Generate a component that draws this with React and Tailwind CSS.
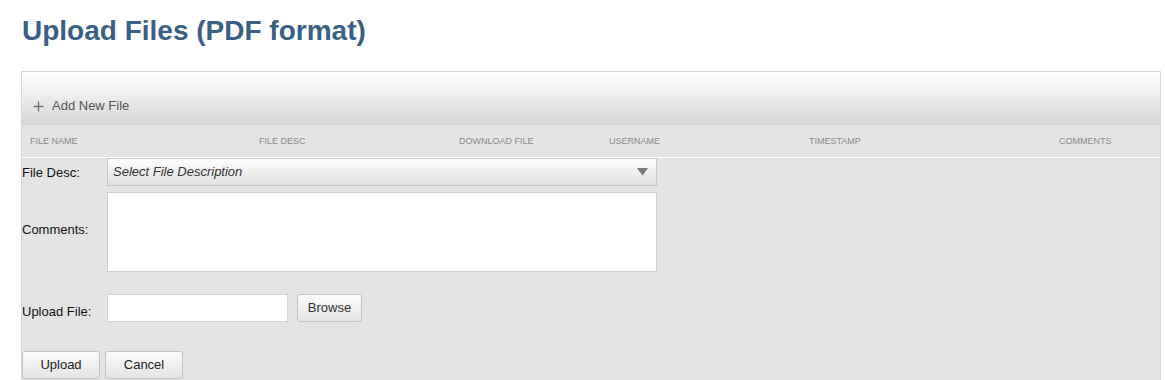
export default function App() {
  return (
    <div className="font-['Liberation_Sans',Arial,sans-serif] bg-white w-[1165px] h-[380px] overflow-hidden">
      <h1 className="ml-[22px] pt-[15px] text-[28px] leading-[32px] font-bold text-[#3a5f85]">
        Upload Files (PDF format)
      </h1>
      <div className="ml-[21px] mt-[24px] w-[1140px] border border-[#d6d6d6] border-b-0">
        <div className="h-[53px] bg-linear-to-b from-[#fefefe] to-[#d7d7d7] flex items-end pb-[11px] pl-[11px]">
          <div className="flex items-center gap-[8px] text-[13px] leading-[16px] text-[#555]">
            <svg width="11" height="11" viewBox="0 0 11 11" className="shrink-0">
              <path d="M5.5 0.5V10.5M0.5 5.5H10.5" stroke="#707070" strokeWidth="1.4" />
            </svg>
            <span>Add New File</span>
          </div>
        </div>
        <div className="grid grid-cols-[229px_200px_150px_200px_250px_1fr] h-[33px] items-center bg-[#e4e4e4] text-[9px] leading-[11px] text-[#8a8a8a] border-b border-white">
          <div className="pl-[8px]">FILE NAME</div>
          <div className="pl-[8px]">FILE DESC</div>
          <div className="pl-[8px]">DOWNLOAD FILE</div>
          <div className="pl-[8px]">USERNAME</div>
          <div className="pl-[8px]">TIMESTAMP</div>
          <div className="pl-[8px]">COMMENTS</div>
        </div>
        <div className="bg-[#e4e4e4] text-[13px] leading-[16px] text-[#111] pb-[2px]">
          <div className="flex items-center h-[28px]">
            <div className="w-[85px] pt-[1px]">File Desc:</div>
            <div className="w-[550px] h-[28px] border border-[#c8c8c8] bg-linear-to-b from-[#fefefe] to-[#e0e0e0] flex items-center justify-between pl-[5px] pr-[8px]">
              <span className="italic text-[#333]">Select File Description</span>
              <svg width="11" height="8" viewBox="0 0 11 8">
                <path d="M0 0H11L5.5 7.5Z" fill="#7a7a7a" />
              </svg>
            </div>
          </div>
          <div className="flex items-center h-[80px] mt-[6px]">
            <div className="w-[85px] mb-[5px]">Comments:</div>
            <div className="w-[550px] h-[80px] border border-[#cfcfcf] bg-white"></div>
          </div>
          <div className="flex items-center h-[28px] mt-[22px]">
            <div className="w-[85px] pt-[8px]">Upload File:</div>
            <div className="w-[181px] h-[28px] border border-[#d4d4d4] bg-white"></div>
            <button className="ml-[9px] w-[65px] h-[28px] rounded-[3px] border border-[#c4c4c4] bg-linear-to-b from-[#fcfcfc] to-[#e4e4e4] text-[13px] text-[#333] flex items-center justify-center">
              Browse
            </button>
          </div>
          <div className="flex items-center gap-[5px] mt-[29px]">
            <button className="w-[78px] h-[28px] rounded-[3px] border border-[#c4c4c4] bg-linear-to-b from-[#fcfcfc] to-[#e4e4e4] text-[13px] text-[#222] flex items-center justify-center">
              Upload
            </button>
            <button className="w-[78px] h-[28px] rounded-[3px] border border-[#c4c4c4] bg-linear-to-b from-[#fcfcfc] to-[#e4e4e4] text-[13px] text-[#222] flex items-center justify-center">
              Cancel
            </button>
          </div>
        </div>
      </div>
    </div>
  );
}
